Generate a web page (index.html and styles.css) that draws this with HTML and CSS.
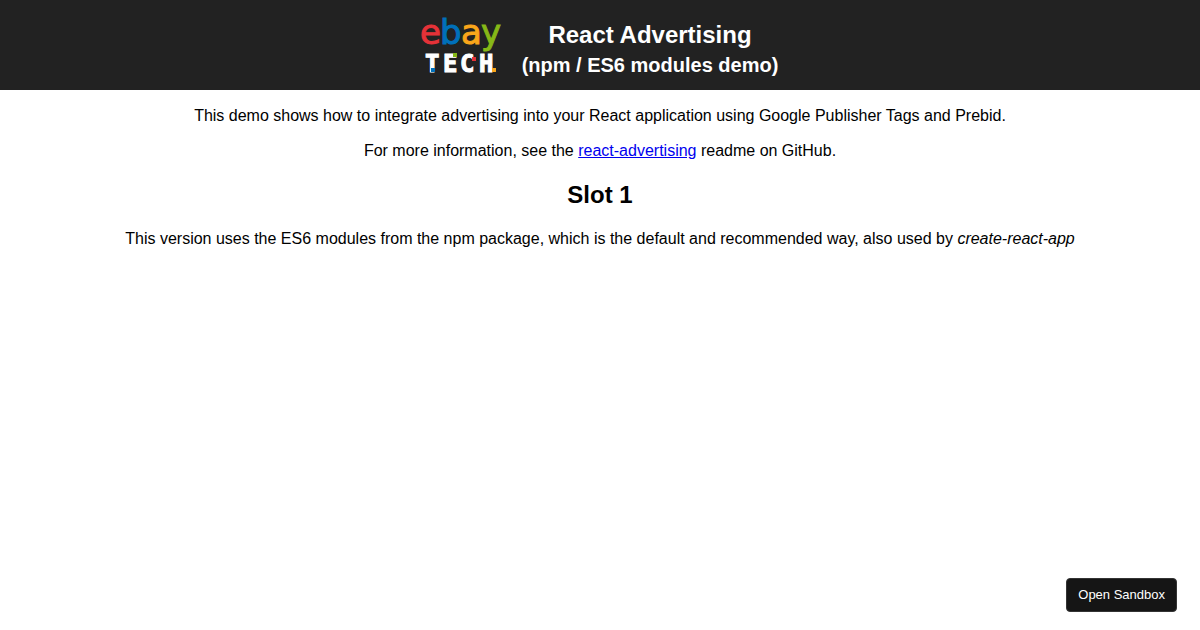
FILE: index.html
```html
<!DOCTYPE html>
<html lang="en">
<head>
    <meta charset="UTF-8">
    <meta name="viewport" content="width=device-width, initial-scale=1.0">
    <title>React Advertising Demo</title>
    <link rel="stylesheet" href="styles.css">
</head>
<body>
    <header class="header">
        <svg class="logo" viewBox="0 0 80 56" role="img" aria-label="ebay TECH">
            <g class="logo-ebay">
                <text class="red" x="-2" y="27">e</text>
                <text class="blue" x="18" y="27">b</text>
                <text class="yellow" x="39" y="27">a</text>
                <text class="green" x="59" y="27">y</text>
            </g>
            <text class="logo-tech" x="3 21 38 57" y="55">TECH</text>
            <rect class="blue" x="9" y="51" width="4" height="4"/>
            <rect class="green" x="31" y="36" width="4" height="4"/>
            <rect class="red" x="50" y="40" width="4" height="4"/>
            <rect class="yellow" x="70" y="51" width="4" height="4"/>
        </svg>
        <div class="title">
            <h1>React Advertising</h1>
            <h2>(npm / ES6 modules demo)</h2>
        </div>
    </header>
    <main class="content">
        <p>This demo shows how to integrate advertising into your React application using Google Publisher Tags and Prebid.</p>
        <p>For more information, see the <a href="#">react-advertising</a> readme on GitHub.</p>
        <h2>Slot 1</h2>
        <p>This version uses the ES6 modules from the npm package, which is the default and recommended way, also used by <em>create-react-app</em></p>
    </main>
    <button class="sandbox-button" type="button">Open Sandbox</button>
</body>
</html>
```
FILE: styles.css
```css
body {
    margin: 0;
    font-family: Helvetica, "Liberation Sans", Arial, sans-serif;
    font-size: 16px;
    text-align: center;
    color: #000;
    background-color: #fff;
}
.header {
    display: flex;
    justify-content: center;
    align-items: center;
    gap: 20px;
    height: 90px;
    color: #fff;
    background-color: #222;
}
.logo {
    width: 80px;
    height: 56px;
    overflow: visible;
}
.logo-ebay {
    font-family: "DejaVu Sans", sans-serif;
    font-size: 34px;
    stroke-width: 1px;
}
.logo-tech {
    font-family: "DejaVu Sans Mono", monospace;
    font-size: 24px;
    font-weight: bold;
    fill: #fff;
    stroke: #fff;
    stroke-width: 1px;
}
.red {
    fill: #e53238;
    stroke: #e53238;
}
.blue {
    fill: #0070ba;
    stroke: #0070ba;
}
.yellow {
    fill: #faa61a;
    stroke: #faa61a;
}
.green {
    fill: #86b817;
    stroke: #86b817;
}
.logo rect {
    stroke: none;
}
.title {
    padding-top: 8px;
}
.title h1 {
    margin: 0;
    font-size: 24px;
    line-height: 32px;
}
.title h2 {
    margin: 0;
    font-size: 20px;
    line-height: 28px;
}
.content p {
    margin: 16px 0;
    line-height: 19px;
}
.content h2 {
    margin: 20px 0;
    font-size: 24px;
    line-height: 29px;
}
.sandbox-button {
    position: fixed;
    right: 23px;
    bottom: 18px;
    height: 34px;
    padding: 0 11px 2px;
    font-family: inherit;
    font-size: 13px;
    color: #fff;
    background-color: #151515;
    border: 1px solid #343434;
    border-radius: 4px;
    cursor: pointer;
}
```
